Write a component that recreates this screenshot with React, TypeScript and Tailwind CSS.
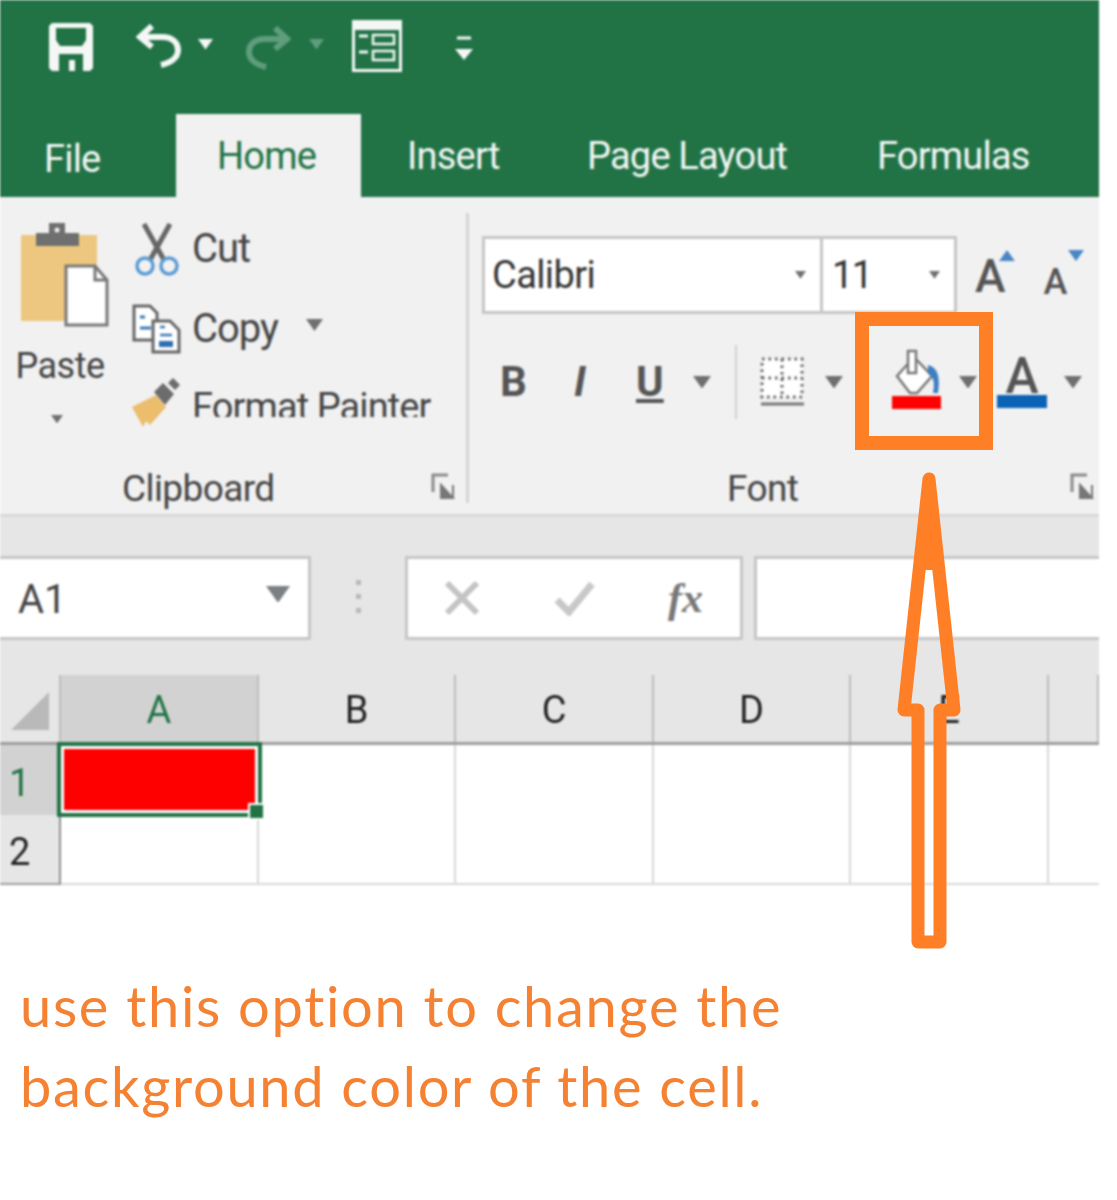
import React from "react";

const roboto = "font-['Roboto',sans-serif]";

function Caret({ className = "", size = 12, color = "#6f6f6f" }: { className?: string; size?: number; color?: string }) {
  return (
    <svg width={size} height={size * 0.7} viewBox="0 0 10 7" className={className}>
      <path d="M0 0H10L5 7Z" fill={color} />
    </svg>
  );
}

function Launcher({ className = "" }: { className?: string }) {
  return (
    <svg width="24" height="28" viewBox="0 0 24 28" className={className}>
      <path d="M2 20V3H17" fill="none" stroke="#8a8a8a" strokeWidth="3" />
      <path d="M10 13L22 26H10Z M22 13V26" fill="#777" stroke="#777" strokeWidth="2" />
    </svg>
  );
}

function SaveIcon() {
  return (
    <svg width="46" height="50" viewBox="0 0 46 50">
      <path
        fillRule="evenodd"
        fill="#f4f7f5"
        d="M4 1H42L45 4V46L42 49H4L1 46V4Z M8 6V18L12 24H34L38 18V6Z M11 32V49H21V38H27V49H35V32Z"
      />
    </svg>
  );
}

function ArrowBack({ color, flip = false }: { color: string; flip?: boolean }) {
  return (
    <svg width="46" height="50" viewBox="0 0 46 50" className={flip ? "-scale-x-100" : ""}>
      <path d="M16 6L4 17L16 27" fill="none" stroke={color} strokeWidth="6" />
      <path d="M5 17H26C38 17 42 24 42 30C42 38 34 43 25 45" fill="none" stroke={color} strokeWidth="6" />
    </svg>
  );
}

function QuickPrint() {
  return (
    <svg width="50" height="52" viewBox="0 0 50 52">
      <rect x="1.5" y="1.5" width="47" height="49" fill="none" stroke="#f4f7f5" strokeWidth="3" />
      <rect x="1" y="1" width="48" height="9" fill="#f4f7f5" />
      <path d="M7 16H16M7 32H16" stroke="#f4f7f5" strokeWidth="3" />
      <rect x="21" y="15" width="21" height="9" fill="none" stroke="#f4f7f5" strokeWidth="2.5" />
      <rect x="21" y="31" width="21" height="9" fill="none" stroke="#f4f7f5" strokeWidth="2.5" />
    </svg>
  );
}

function CustomizeIcon() {
  return (
    <svg width="18" height="26" viewBox="0 0 18 26">
      <path d="M2 2H16" stroke="#f4f7f5" strokeWidth="3" />
      <path d="M0 13H18L9 24Z" fill="#f4f7f5" />
    </svg>
  );
}

function PasteIcon() {
  return (
    <svg width="94" height="106" viewBox="0 0 94 106">
      <path d="M2 14H78V100H2Z" fill="#edc77f" />
      <path d="M17 25V12H30V2H46V12H60V25Z" fill="#6f6f6f" />
      <circle cx="38" cy="9" r="2.5" fill="#eee" />
      <path d="M47 45H76L88 59V104H47Z" fill="#fff" stroke="#777" strokeWidth="3" />
      <path d="M76 45V59H88" fill="none" stroke="#777" strokeWidth="3" />
    </svg>
  );
}

function CutIcon() {
  return (
    <svg width="46" height="54" viewBox="0 0 46 54">
      <path d="M10 2L30 38M36 2L16 38" stroke="#666" strokeWidth="5" />
      <circle cx="11" cy="44" r="8" fill="none" stroke="#5b9bd5" strokeWidth="3.5" />
      <circle cx="35" cy="44" r="8" fill="none" stroke="#5b9bd5" strokeWidth="3.5" />
    </svg>
  );
}

function CopyIcon() {
  return (
    <svg width="50" height="50" viewBox="0 0 50 50">
      <path d="M2 2H18L25 9V36H2Z" fill="#fff" stroke="#666" strokeWidth="3" />
      <path d="M8 13H13M8 24H19" stroke="#3b79b9" strokeWidth="3" />
      <path d="M21 17H38L47 26V48H21Z" fill="#fff" stroke="#666" strokeWidth="3" />
      <path d="M28 23H33M28 31H40" stroke="#3b79b9" strokeWidth="2.5" />
      <path d="M27 37H41V43H27Z" fill="#2f6fb0" />
    </svg>
  );
}

function PainterIcon() {
  return (
    <svg width="50" height="52" viewBox="0 0 50 52">
      <path d="M24 18L34 30L18 48L14 44L11 50L0 30Z" fill="#ebbd6d" />
      <path d="M22 15L31 6L42 17L33 28Z" fill="#6c6c6c" />
      <path d="M36 6L41 1L48 8L43 13Z" fill="#6c6c6c" />
    </svg>
  );
}

function BordersIcon() {
  return (
    <svg width="46" height="50" viewBox="0 0 46 50">
      <rect x="2" y="2" width="40" height="38" fill="#fff" />
      <path
        d="M2 2H42V40H2ZM22 2V40M2 21H42"
        fill="none"
        stroke="#666"
        strokeWidth="3"
        strokeDasharray="2.5 4"
      />
      <path d="M1 47H44" stroke="#777" strokeWidth="3" />
    </svg>
  );
}

function FillIcon() {
  return (
    <svg width="52" height="60" viewBox="0 3 52 60" className="overflow-visible">
      <path d="M24 8L42 27L27 44H20L7 27Z" fill="#fff" stroke="#777" strokeWidth="2.5" />
      <path d="M18 2H26V24H18Z" fill="#fff" stroke="#777" strokeWidth="2.5" />
      <path d="M38 16C46 18 51 25 48 44H43C45 34 44 28 38 25Z" fill="#3d7fc1" />
      <rect x="2" y="47" width="49" height="13" fill="#ff0000" />
    </svg>
  );
}

function Arrow() {
  return (
    <svg
      width="90"
      height="490"
      viewBox="0 0 90 490"
      className="absolute left-[885px] top-[465px]"
    >
      <path d="M44 14L54 105H34Z" fill="#ff7f27" />
      <path
        d="M44 14L69 245H55V477H33V245H19Z"
        fill="none"
        stroke="#ff7f27"
        strokeWidth="13"
        strokeLinejoin="round"
      />
    </svg>
  );
}

const columns = [
  { label: "A", width: "w-[198px]", active: true },
  { label: "B", width: "w-[197px]" },
  { label: "C", width: "w-[198px]" },
  { label: "D", width: "w-[197px]" },
  { label: "E", width: "w-[198px]" },
  { label: "", width: "flex-1" },
];

export default function App() {
  return (
    <div className="relative h-[1200px] w-[1117px] overflow-hidden bg-white">
      <div className={`w-[1099px] blur-[0.8px] ${roboto} text-[#444]`}>
        {/* Title bar */}
        <div className="h-[197px] bg-[#217346]">
          <div className="flex h-[114px] items-start pt-[22px] pl-[48px]">
            <SaveIcon />
            <div className="ml-[42px] mt-[-2px]">
              <ArrowBack color="#f4f7f5" />
            </div>
            <Caret className="ml-[16px] mt-[17px]" size={15} color="#f4f7f5" />
            <div className="ml-[32px]">
              <ArrowBack color="#5f9d7d" flip />
            </div>
            <Caret className="ml-[18px] mt-[17px]" size={15} color="#5f9d7d" />
            <div className="ml-[28px] mt-[-2px]">
              <QuickPrint />
            </div>
            <div className="ml-[53px] mt-[14px]">
              <CustomizeIcon />
            </div>
          </div>
          <div className="flex h-[83px] text-[38px] leading-none tracking-[-0.8px] text-[#f3f7f5]">
            <div className="w-[176px] pl-[44px] pt-[26px]">File</div>
            <div className="w-[185px] bg-[#f1f1f1] pl-[41px] pt-[23px] text-[#217346]">Home</div>
            <div className="w-[226px] pl-[46px] pt-[23px]">Insert</div>
            <div className="w-[290px] pt-[23px]">Page Layout</div>
            <div className="pt-[23px]">Formulas</div>
          </div>
        </div>

        {/* Ribbon */}
        <div className="flex h-[320px] border-b-[3px] border-[#d9d9d9] bg-[#f1f1f1]">
          <div className="flex w-[466px] flex-col">
            <div className="flex h-[273px]">
              <div className="flex w-[132px] flex-col items-center pt-[24px]">
                <div>
                  <PasteIcon />
                </div>
                <div className="mr-[12px] mt-[21px] text-[36px] leading-none tracking-[-0.5px]">Paste</div>
                <Caret className="mr-[18px] mt-[31px]" size={12} />
              </div>
              <div className="flex flex-col pt-[22px]">
                <div className="flex h-[60px] items-center">
                  <div className="ml-[2px] flex w-[58px]">
                    <CutIcon />
                  </div>
                  <span className="text-[40px] leading-none tracking-[-1px]">Cut</span>
                </div>
                <div className="mt-[23px] flex h-[54px] items-center">
                  <div className="flex w-[60px]">
                    <CopyIcon />
                  </div>
                  <span className="text-[40px] leading-none tracking-[-1px]">Copy</span>
                  <Caret className="ml-[28px] mb-[8px]" size={17} />
                </div>
                <div className="mt-[21px] flex h-[50px] items-start">
                  <div className="flex w-[60px]">
                    <PainterIcon />
                  </div>
                  <div className="h-[40px] overflow-hidden pt-[11px] text-[38px] leading-none tracking-[-0.9px]">
                    Format Painter
                  </div>
                </div>
              </div>
            </div>
            <div className="flex h-[44px] items-start justify-between pr-[11px]">
              <span className="ml-[122px] text-[37px] leading-none tracking-[-0.6px]">Clipboard</span>
              <Launcher className="mt-[2px]" />
            </div>
          </div>
          <div className="mt-[16px] h-[290px] w-[3px] bg-[#d4d4d4]" />

          <div className="flex flex-1 flex-col pl-[13px]">
            <div className="flex h-[273px] flex-col pt-[39px]">
              <div className="flex h-[78px] items-start">
                <div className="flex h-[78px] w-[341px] items-center justify-between border-[3px] border-[#c6c6c6] bg-white pl-[7px] pr-[14px]">
                  <span className="text-[38px] leading-none tracking-[-0.6px] text-[#333]">Calibri</span>
                  <Caret size={11} />
                </div>
                <div className="ml-[-3px] flex h-[78px] w-[137px] items-center justify-between border-[3px] border-[#c6c6c6] bg-white pl-[9px] pr-[14px]">
                  <span className="text-[38px] leading-none tracking-[-1.5px] text-[#333]">11</span>
                  <Caret size={11} />
                </div>
                <div className="relative ml-[18px] mt-[17px] text-[46px] font-medium leading-none text-[#555]">
                  A
                  <Caret className="absolute left-[24px] top-[-3px] rotate-180" size={16} color="#4a86c5" />
                </div>
                <div className="relative ml-[38px] mt-[28px] text-[36px] font-medium leading-none text-[#555]">
                  A
                  <Caret className="absolute left-[24px] top-[-14px]" size={16} color="#4a86c5" />
                </div>
              </div>
              <div className="mt-[31px] flex items-center">
                <b className="ml-[18px] w-[68px] text-[42px] leading-none text-[#555]">B</b>
                <i className="ml-[6px] w-[62px] text-[42px] font-bold leading-none text-[#555]">I</i>
                <span className="w-[57px] text-[42px] font-bold leading-none text-[#555] underline">U</span>
                <Caret className="mr-[24px]" size={18} />
                <div className="mr-[23px] h-[74px] w-[2px] bg-[#d0d0d0]" />
                <BordersIcon />
                <Caret className="ml-[19px] mr-[47px]" size={18} />
                <FillIcon />
                <Caret className="ml-[17px] mr-[20px]" size={18} />
                <div className="flex w-[50px] flex-col items-center">
                  <span className="h-[36px] text-[50px] font-medium leading-[40px] text-[#555]">A</span>
                  <div className="mt-[3px] h-[13px] w-full bg-[#0b63b5]" />
                </div>
                <Caret className="ml-[17px]" size={18} />
              </div>
            </div>
            <div className="flex h-[44px] items-start justify-between pr-[5px]">
              <span className="ml-[245px] text-[37px] leading-none tracking-[-0.6px]">Font</span>
              <Launcher className="mt-[2px]" />
            </div>
          </div>
        </div>

        {/* Formula bar */}
        <div className="flex h-[158px] items-start bg-[#e6e6e6] pt-[39px]">
          <div className="flex h-[84px] w-[311px] items-center justify-between border-y-[3px] border-r-[3px] border-[#c6c6c6] bg-white px-[18px]">
            <span className="pt-[4px] text-[40px] leading-none text-[#444]">A1</span>
            <Caret className="mb-[8px]" size={24} color="#7b7f82" />
          </div>
          <div className="flex w-[94px] flex-col items-center gap-[9px] pt-[24px]">
            <div className="h-[5px] w-[5px] bg-[#b8b8b8]" />
            <div className="h-[5px] w-[5px] bg-[#b8b8b8]" />
            <div className="h-[5px] w-[5px] bg-[#b8b8b8]" />
          </div>
          <div className="flex h-[84px] w-[338px] items-center border-[3px] border-[#c6c6c6] bg-white">
            <svg width="36" height="36" viewBox="0 0 36 36" className="ml-[36px]">
              <path d="M3 3L33 33M33 3L3 33" stroke="#c4c4c4" strokeWidth="6" />
            </svg>
            <svg width="42" height="36" viewBox="0 0 42 36" className="ml-[74px]">
              <path d="M3 20L15 32L38 4" fill="none" stroke="#c8c8c8" strokeWidth="7" />
            </svg>
            <span className="ml-[72px] font-['Liberation_Serif',serif] text-[42px] font-bold italic leading-none text-[#777]">
              fx
            </span>
          </div>
          <div className="ml-[11px] h-[84px] flex-1 border-y-[3px] border-l-[3px] border-[#c6c6c6] bg-white" />
        </div>

        {/* Sheet */}
        <div className="relative">
          <div className="flex h-[70px] border-b-[3px] border-[#9e9e9e] bg-[#e6e6e6]">
            <div className="flex w-[61px] items-end justify-end border-r-[2px] border-[#bcbcbc] pb-[12px] pr-[10px]">
              <div className="h-0 w-0 border-b-[38px] border-l-[38px] border-b-[#b9b9b9] border-l-transparent" />
            </div>
            {columns.map((col) => (
              <div
                key={col.label}
                className={`flex ${col.width} items-center justify-center border-r-[2px] border-[#bcbcbc] pt-[2px] text-[38px] leading-none ${
                  col.active ? "bg-[#d2d2d2] text-[#217346]" : "text-[#222]"
                } ${col.label === "" ? "border-r-0" : ""}`}
              >
                {col.label}
              </div>
            ))}
          </div>
          {["1", "2"].map((row) => (
            <div key={row} className="flex h-[70px]">
              <div
                className={`flex w-[61px] items-center border-r-[2px] border-[#8f8f8f] pl-[9px] pt-[5px] text-[38px] leading-none ${
                  row === "1" ? "bg-[#d2d2d2] text-[#217346]" : "border-b-[2px] border-b-[#9e9e9e] bg-[#e6e6e6] text-[#222]"
                }`}
              >
                {row}
              </div>
              {columns.map((col) => (
                <div
                  key={col.label}
                  className={`${col.width} ${col.label === "" ? "" : "border-r-[2px]"} border-[#d8d8d8] ${
                    row === "2" ? "border-b-[2px]" : ""
                  }`}
                />
              ))}
            </div>
          ))}
          {/* Selected cell */}
          <div className="absolute left-[57px] top-[67px] h-[75px] w-[205px] border-[4px] border-[#217346] bg-white p-[3px]">
            <div className="h-full w-full bg-[#ff0000]" />
            <div className="absolute bottom-[-7px] right-[-7px] h-[17px] w-[17px] border-[2px] border-white bg-[#217346]" />
          </div>
        </div>
      </div>

      {/* Annotation */}
      <div className="mt-[81px] pl-[20px] font-['Lato',sans-serif] text-[56px] leading-[80px] tracking-[1.7px] text-[#f58233] blur-[0.4px]">
        <div>use this option to change the</div>
        <div>background color of the cell.</div>
      </div>
      <div className="absolute left-[855px] top-[312px] h-[138px] w-[138px] border-[14px] border-[#ff7f27]" />
      <Arrow />
    </div>
  );
}
